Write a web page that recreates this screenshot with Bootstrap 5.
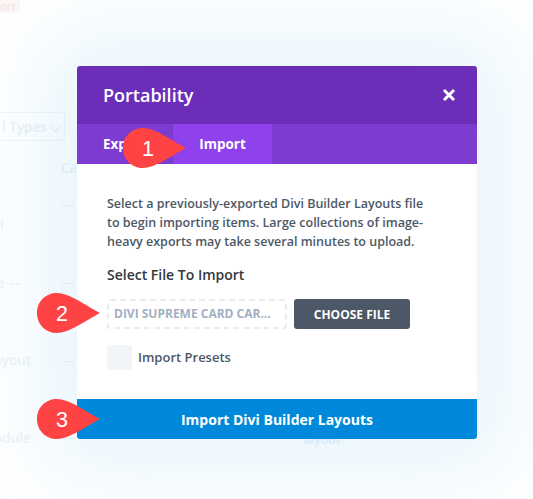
<!DOCTYPE html>
<html lang="en">
<head>
<meta charset="utf-8">
<title>Portability</title>
<link rel="stylesheet" href="https://cdn.jsdelivr.net/npm/bootstrap@5.3.0/dist/css/bootstrap.min.css">
<style>
html,body{height:100%;overflow:hidden;background:#fff;font-family:"Open Sans",sans-serif}
.stage{width:533px;height:499px;padding:66px 56px 60px 77px;overflow:hidden}
.ghost{position:absolute;color:#eef3f7;font-weight:600;font-size:13.5px;line-height:20px;white-space:nowrap}
.ghost-top{left:0;top:0;width:20px;height:13px;background:#fcf7f6;color:#f3e4e1;font-size:11px;line-height:11px;overflow:hidden}
.ghost-select{left:-10px;top:112px;width:75px;height:29px;border:1px solid #f3f6f8;border-radius:3px;padding:4px 0 0 11px;color:#ecf1f5}
.ghost-rule{position:absolute;left:62px;width:13px;height:1px;background:#eef5f8}
.dialog{position:relative;width:400px;height:373px;border-radius:3px;background:#fff;box-shadow:0 0 90px 30px rgba(60,170,230,.13)}
.dlg-head{height:58px;background:#6c2eb9;border-radius:3px 3px 0 0;padding:0 21px 0 26px;color:#fff;font-size:18px;font-weight:600}
.dlg-close{background:none;border:0;padding:0;width:14px;height:14px;line-height:0}
.dlg-tabs{height:40px;background:#7d3bcf}
.dlg-tab{height:40px;color:#fff;font-size:13.5px;font-weight:700;line-height:40px}
.tab-export{width:96px;padding-left:26px}
.tab-import{width:99px;text-align:center;background:#8f42ec}
.dlg-body{height:235px;padding:30px 30px 0;color:#4c5866;font-size:12.5px;line-height:19px;font-weight:600}
.dlg-intro{margin:0 0 14px}
.dlg-label{color:#32373c;font-size:14px;font-weight:600;line-height:20px;margin-bottom:14px}
.file-name{width:180px;height:30px;border:2px dashed #e6ecf2;border-radius:3px;color:#a3b0c2;font-size:12px;font-weight:700;line-height:26px;padding-left:5px;white-space:nowrap}
.file-btn{width:116px;height:30px;margin-left:7px;background:#4c5866;border:0;border-radius:3px;color:#fff;font-size:12px;font-weight:700;padding:0}
.preset-row{margin-top:16px;color:#4c5866;font-size:13px;font-weight:600}
.preset-box{width:25px;height:25px;background:#f1f5f9;border-radius:3px;margin-right:6px}
.dlg-submit{position:absolute;left:0;bottom:0;width:100%;height:40px;background:#0089da;border:0;border-radius:0 0 3px 3px;color:#fff;font-size:14px;font-weight:700;padding:0}
.pin{position:absolute;width:66px;height:42px;line-height:0}
.pin text{font-family:"Liberation Sans",sans-serif;font-size:21.5px;fill:#fff}
</style>
</head>
<body>
<div class="stage position-relative">
  <div class="ghost ghost-top">ort</div>
  <div class="ghost ghost-select">l Types ⌵</div>
  <div class="ghost" style="left:61px;top:158px">Ca</div>
  <div class="ghost" style="left:0;top:214px">i</div>
  <div class="ghost" style="left:-3px;top:273px">e —</div>
  <div class="ghost" style="left:-6px;top:350px">ayout</div>
  <div class="ghost" style="left:-6px;top:428px">odule</div>
  <div class="ghost" style="left:304px;top:430px;font-size:12px;color:#e4f2f9">layout</div>
  <div class="ghost-rule" style="top:205px"></div>
  <div class="ghost-rule" style="top:283px"></div>
  <div class="ghost-rule" style="top:361px"></div>
  <div class="ghost-rule" style="top:438px"></div>

  <div class="dialog">
    <div class="dlg-head d-flex align-items-center justify-content-between">
      <span>Portability</span>
      <button class="dlg-close" type="button" aria-label="Close">
        <svg width="14" height="14" viewBox="0 0 14 14"><path d="M2 2 12 12M12 2 2 12" stroke="#fff" stroke-width="3" fill="none"/></svg>
      </button>
    </div>
    <div class="dlg-tabs d-flex">
      <div class="dlg-tab tab-export">Export</div>
      <div class="dlg-tab tab-import">Import</div>
    </div>
    <div class="dlg-body">
      <p class="dlg-intro">Select a previously-exported Divi Builder Layouts file<br>to begin importing items. Large collections of image-<br>heavy exports may take several minutes to upload.</p>
      <div class="dlg-label">Select File To Import</div>
      <div class="d-flex">
        <div class="file-name">DIVI SUPREME CARD CAR...</div>
        <button class="file-btn" type="button">CHOOSE FILE</button>
      </div>
      <div class="preset-row d-flex align-items-center">
        <span class="preset-box"></span><span>Import Presets</span>
      </div>
    </div>
    <button class="dlg-submit" type="button">Import Divi Builder Layouts</button>
  </div>

  <svg class="pin" style="left:120px;top:127px" viewBox="0 0 66 42"><path d="M3 21C3 9 12 1 23 1 35 1 51 13 66 21 51 29 35 41 23 41 12 41 3 33 3 21Z" fill="#fe4344"/><text x="28" y="29" text-anchor="middle">1</text></svg>
  <svg class="pin" style="left:34px;top:292px" viewBox="0 0 66 42"><path d="M3 21C3 9 12 1 23 1 35 1 51 13 66 21 51 29 35 41 23 41 12 41 3 33 3 21Z" fill="#fe4344"/><text x="28" y="29" text-anchor="middle">2</text></svg>
  <svg class="pin" style="left:34px;top:398px" viewBox="0 0 66 42"><path d="M3 21C3 9 12 1 23 1 35 1 51 13 66 21 51 29 35 41 23 41 12 41 3 33 3 21Z" fill="#fe4344"/><text x="28" y="29" text-anchor="middle">3</text></svg>
</div>
<script src="https://cdn.jsdelivr.net/npm/bootstrap@5.3.0/dist/js/bootstrap.bundle.min.js"></script>
</body>
</html>
